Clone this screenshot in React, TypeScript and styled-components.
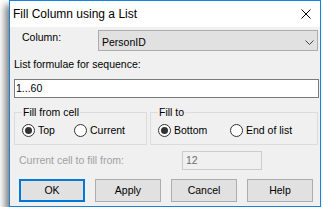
import React from 'react';
import styled, { createGlobalStyle } from 'styled-components';

const Global = createGlobalStyle`
  html, body { margin: 0; padding: 0; background: #ffffff; overflow: hidden; }
  body { font-family: "Liberation Sans", Arial, sans-serif; color: #000; }
  * { box-sizing: border-box; }
`;

const Window = styled.div`
  margin-left: 9px;
  width: 312px;
  height: 207px;
  border: 1px solid #1883d7;
  background: #f0f0f0;
  box-shadow: -4px 5px 7px rgba(0, 0, 0, 0.5);
  display: flex;
  flex-direction: column;
`;

const TitleBar = styled.div`
  flex: none;
  height: 26px;
  background: #ffffff;
  display: flex;
  align-items: center;
  padding: 0 9px 0 3px;
  font-size: 12px;
`;

const Title = styled.span`
  flex: 1;
`;

const Body = styled.div`
  flex: 1;
  display: flex;
  flex-direction: column;
  padding: 3px 1px 0 4px;
  font-size: 10.5px;
  line-height: 13px;
`;

const ColumnRow = styled.div`
  display: flex;
  height: 21px;
`;

const ColumnLabel = styled.span`
  padding: 1px 0 0 8px;
`;

const Select = styled.div`
  margin-left: auto;
  margin-right: 1px;
  width: 220px;
  height: 21px;
  border: 1px solid #adadad;
  background: #e1e1e1;
  display: flex;
  align-items: center;
  padding: 3px 3px 0 3px;
`;

const SelectText = styled.span`
  flex: 1;
`;

const FieldLabel = styled.div`
  margin-top: 7px;
`;

const TextBox = styled.div`
  margin-top: 8px;
  width: 305px;
  height: 19px;
  border: 1px solid #7a7a7a;
  background: #ffffff;
  display: flex;
  align-items: center;
  padding-left: 1px;
`;

const GroupRow = styled.div`
  margin-top: 8px;
  display: flex;
  gap: 3px;
`;

const Group = styled.fieldset<{ $w: number }>`
  margin: 0;
  width: ${(p) => p.$w}px;
  min-width: 0;
  border: 1px solid #dcdcdc;
  padding: 0 7px 7px 7px;
`;

const Legend = styled.legend`
  padding: 0 1px;
  margin: 0;
  line-height: 13px;
`;

const RadioRow = styled.div`
  margin-top: 5px;
  height: 13px;
  display: flex;
`;

const RadioItem = styled.div<{ $w?: number }>`
  display: flex;
  align-items: center;
  gap: 3px;
  ${(p) => (p.$w ? `width: ${p.$w}px;` : '')}
`;

const RadioCircle = styled.span<{ $on?: boolean }>`
  width: 13px;
  height: 13px;
  border-radius: 50%;
  border: 1px solid #333333;
  background: #ffffff;
  display: flex;
  align-items: center;
  justify-content: center;
  &::after {
    content: '';
    width: 7px;
    height: 7px;
    border-radius: 50%;
    background: ${(p) => (p.$on ? '#333333' : 'transparent')};
  }
`;

const CellRow = styled.div`
  margin-top: 6px;
  height: 19px;
  display: flex;
  align-items: center;
`;

const DisabledLabel = styled.span`
  width: 168px;
  padding-left: 5px;
  color: #a0a0a0;
`;

const DisabledBox = styled.div`
  width: 80px;
  height: 19px;
  border: 1px solid #cccccc;
  background: #f0f0f0;
  color: #6d6d6d;
  display: flex;
  align-items: center;
  padding-left: 3px;
`;

const ButtonRow = styled.div`
  margin-top: 9px;
  padding-left: 5px;
  display: flex;
  gap: 10px;
`;

const Button = styled.div<{ $default?: boolean }>`
  width: 66px;
  height: 23px;
  border: ${(p) => (p.$default ? '2px solid #0078d7' : '1px solid #adadad')};
  background: #e1e1e1;
  display: flex;
  align-items: center;
  justify-content: center;
`;

const CloseIcon = () => (
  <svg width="10" height="10" viewBox="0 0 10 10">
    <path d="M0.5 0.5 L9.5 9.5 M9.5 0.5 L0.5 9.5" stroke="#000" strokeWidth="1" fill="none" />
  </svg>
);

const Chevron = () => (
  <svg width="9" height="5" viewBox="0 0 9 5">
    <path d="M0.5 0.5 L4.5 4.5 L8.5 0.5" stroke="#444" strokeWidth="1" fill="none" />
  </svg>
);

export default function App() {
  return (
    <>
      <Global />
      <Window>
        <TitleBar>
          <Title>Fill Column using a List</Title>
          <CloseIcon />
        </TitleBar>
        <Body>
          <ColumnRow>
            <ColumnLabel>Column:</ColumnLabel>
            <Select>
              <SelectText>PersonID</SelectText>
              <Chevron />
            </Select>
          </ColumnRow>
          <FieldLabel>List formulae for sequence:</FieldLabel>
          <TextBox>1...60</TextBox>
          <GroupRow>
            <Group $w={133}>
              <Legend>Fill from cell</Legend>
              <RadioRow>
                <RadioItem $w={52}>
                  <RadioCircle $on />
                  Top
                </RadioItem>
                <RadioItem>
                  <RadioCircle />
                  Current
                </RadioItem>
              </RadioRow>
            </Group>
            <Group $w={168}>
              <Legend>Fill to</Legend>
              <RadioRow>
                <RadioItem $w={72}>
                  <RadioCircle $on />
                  Bottom
                </RadioItem>
                <RadioItem>
                  <RadioCircle />
                  End of list
                </RadioItem>
              </RadioRow>
            </Group>
          </GroupRow>
          <CellRow>
            <DisabledLabel>Current cell to fill from:</DisabledLabel>
            <DisabledBox>12</DisabledBox>
          </CellRow>
          <ButtonRow>
            <Button $default>OK</Button>
            <Button>Apply</Button>
            <Button>Cancel</Button>
            <Button>Help</Button>
          </ButtonRow>
        </Body>
      </Window>
    </>
  );
}
